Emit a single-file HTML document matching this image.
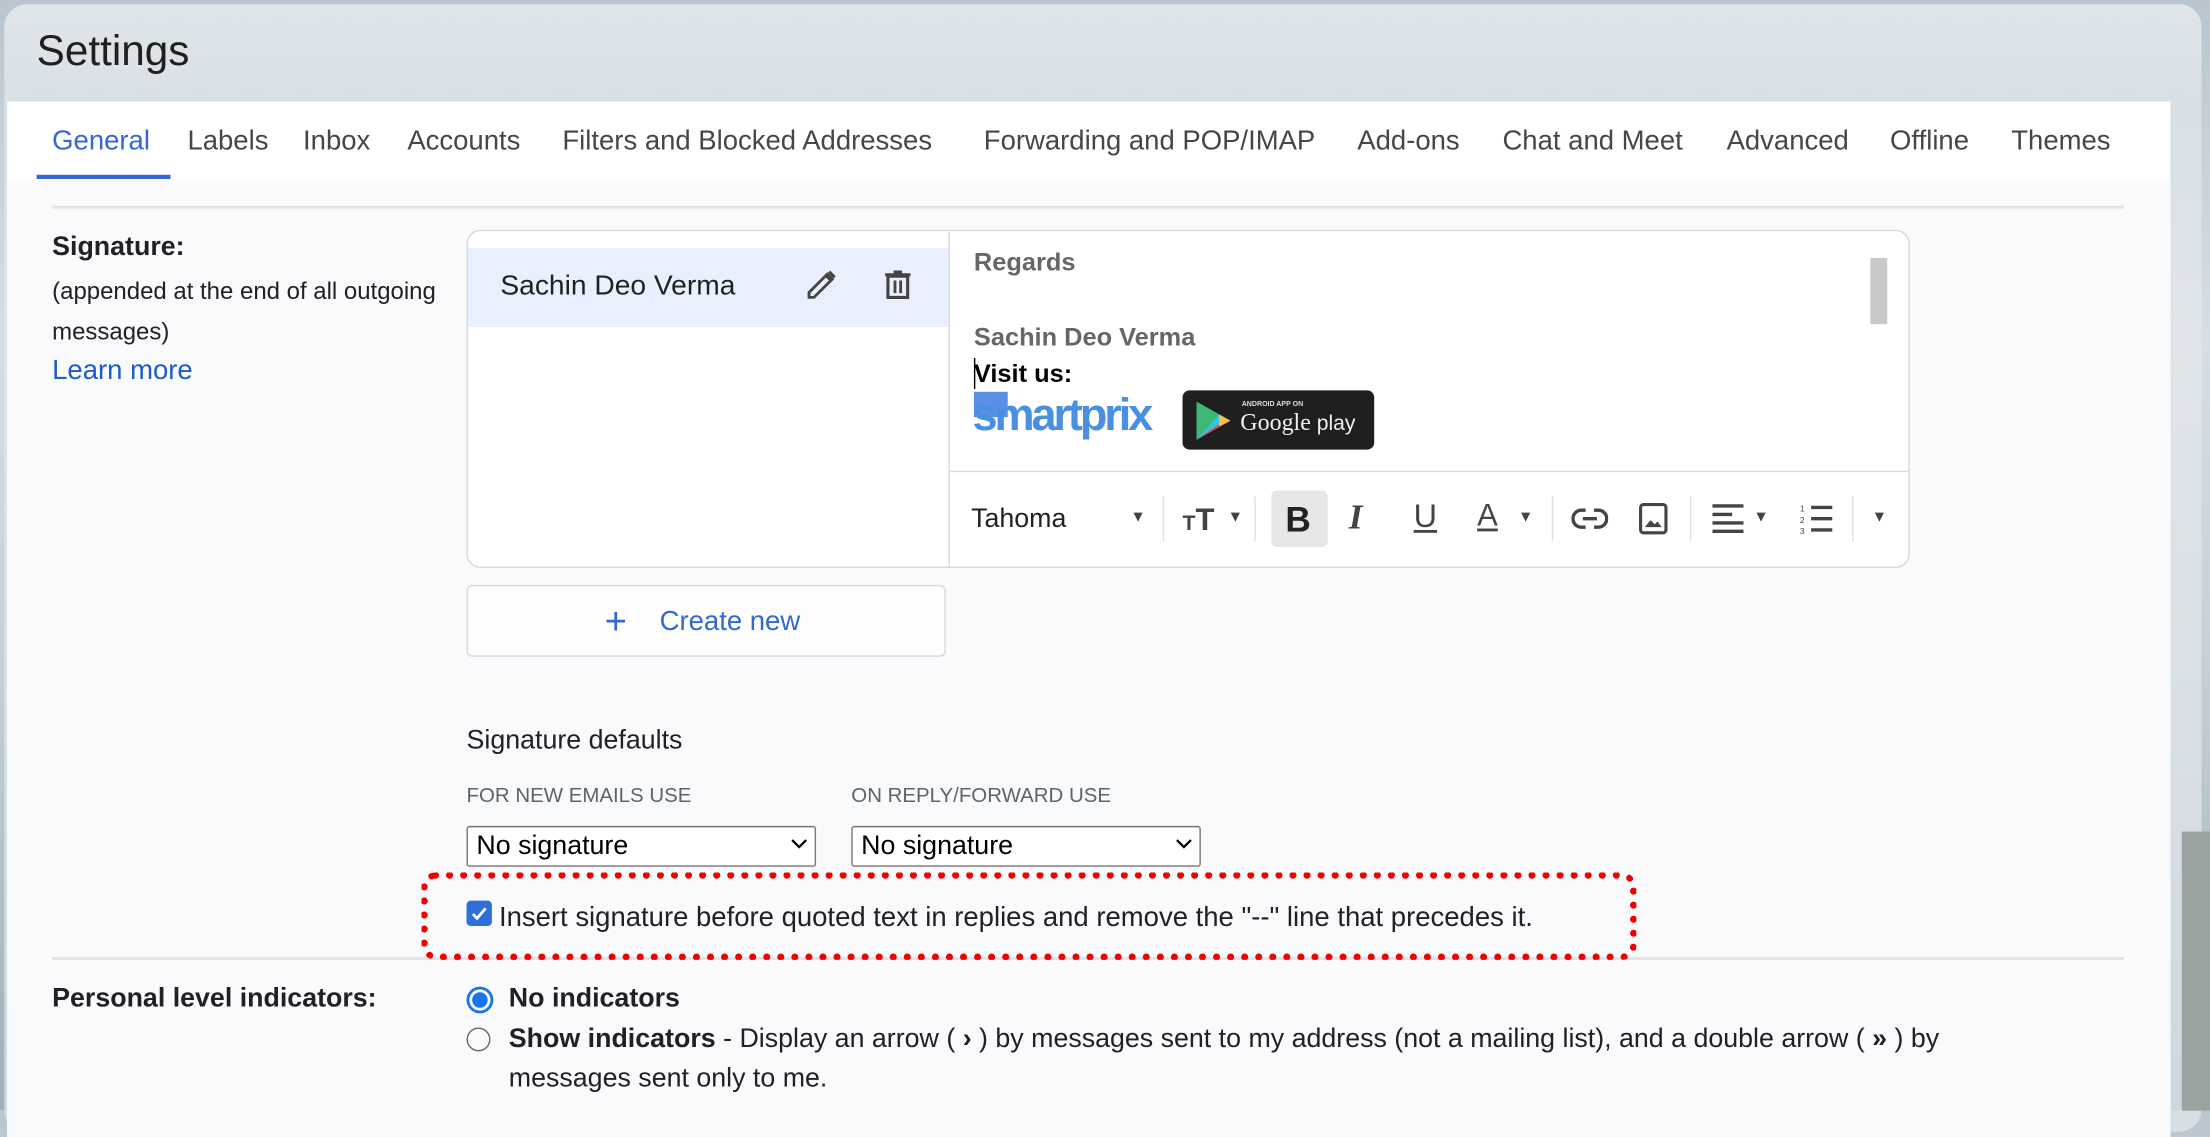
<!DOCTYPE html>
<html><head><meta charset="utf-8"><style>
html,body{margin:0;padding:0;width:2210px;height:1110px;overflow:hidden;}
body{background:linear-gradient(180deg,#b9c6cf 0%,#d7dee3 30%,#c5d0d6 60%,#9fb0b8 100%);font-family:"Liberation Sans",sans-serif;}
#w{position:absolute;left:0;top:0;width:1568px;height:788px;transform:scale(1.40944);transform-origin:0 0;}
.a{position:absolute;white-space:nowrap;}
#panel{position:absolute;left:3px;top:3px;width:1559px;height:800px;border-radius:16px;background:linear-gradient(180deg,rgba(236,240,243,.75),rgba(226,232,236,.7) 70px);}
#content{position:absolute;left:5px;top:127px;width:1535px;height:680px;background:#f9fafb;}
#tabs{position:absolute;left:5px;top:72px;width:1535px;height:55px;background:#fff;box-shadow:0 1px 2px rgba(0,0,0,.08);}
.tab{position:absolute;top:89px;font-size:19.5px;color:#444746;}
.t{color:#202124;}
.hr{position:absolute;height:2px;background:#e3e3e3;}
.r{font-family:"Liberation Sans",sans-serif;font-weight:bold;font-size:18px;}
</style></head><body>
<div id="w">
<div id="panel"></div>
<div style="position:absolute;left:1548px;top:590px;width:20px;height:198px;background:#9aa3a0"></div>
<div class="a t" style="left:26px;top:20px;font-size:30px;color:#1f1f1f">Settings</div>
<div id="tabs"></div>
<div class="tab" style="left:37px;color:#3367d6">General</div>
<div style="position:absolute;left:26px;top:124px;width:95px;height:3px;background:#3367d6"></div>
<div class="tab" style="left:133px">Labels</div>
<div class="tab" style="left:215px">Inbox</div>
<div class="tab" style="left:289px">Accounts</div>
<div class="tab" style="left:399px">Filters and Blocked Addresses</div>
<div class="tab" style="left:698px">Forwarding and POP/IMAP</div>
<div class="tab" style="left:963px">Add-ons</div>
<div class="tab" style="left:1066px">Chat and Meet</div>
<div class="tab" style="left:1225px">Advanced</div>
<div class="tab" style="left:1341px">Offline</div>
<div class="tab" style="left:1427px">Themes</div>
<div id="content"></div>
<div class="hr" style="left:37px;top:146px;width:1470px"></div>

<div class="a t" style="left:37px;top:165px;font-size:19px;font-weight:bold">Signature:</div>
<div class="a t" style="left:37px;top:197px;font-size:17px">(appended at the end of all outgoing</div>
<div class="a t" style="left:37px;top:226px;font-size:17px">messages)</div>
<div class="a" style="left:37px;top:252px;font-size:19.5px;color:#1a5dc7">Learn more</div>

<div style="position:absolute;left:331px;top:163px;width:1022px;height:238px;border:1px solid #d6d8db;border-radius:10px;background:#fff;overflow:hidden">
 <div style="position:absolute;left:0;top:12px;width:341px;height:56px;background:#e9f0fd"></div>
 <div style="position:absolute;left:341px;top:0;width:1px;height:238px;background:#dadce0"></div>
 <div style="position:absolute;left:342px;top:170px;width:680px;height:1px;background:#dadce0"></div>
</div>
<div class="a t" style="left:355px;top:192px;font-size:20px">Sachin Deo Verma</div>
<svg class="a" style="left:571px;top:190px" width="24" height="24" viewBox="0 0 24 24"><path d="M3 21v-3.5L16 4.5l3.5 3.5L6.5 21z" fill="none" stroke="#444" stroke-width="2"/><path d="M15 5.5l3.5 3.5" stroke="#444" stroke-width="2"/><path d="M16.5 3.5l1.5-1.5 4 4-1.5 1.5z" fill="#444"/></svg>
<svg class="a" style="left:626px;top:190px" width="22" height="24" viewBox="0 0 22 24"><path d="M4 6h14v15H4z" fill="none" stroke="#444" stroke-width="2.2"/><path d="M2 5h18M8 3h6" stroke="#444" stroke-width="2.2"/><path d="M9 9v9M13 9v9" stroke="#444" stroke-width="2"/></svg>

<div class="a r" style="left:691px;top:176px;color:#666">Regards</div>
<div class="a r" style="left:691px;top:229px;color:#666">Sachin Deo Verma</div>
<div class="a r" style="left:691px;top:255px;color:#000">Visit us:</div>
<div style="position:absolute;left:691px;top:254px;width:1px;height:22px;background:#000"></div>
<div style="position:absolute;left:1327px;top:183px;width:12px;height:47px;background:#c8c8c8"></div>
<div style="position:absolute;left:691px;top:278px;width:24px;height:18px;background:#5a8fe6"></div>
<div class="a" style="left:690px;top:276px;font-size:32px;font-weight:bold;color:#4a90e2;letter-spacing:-2.2px;font-family:'Liberation Sans Narrow','Liberation Sans',sans-serif">smartprix</div>
<div style="position:absolute;left:839px;top:277px;width:136px;height:42px;background:#1f1f1f;border-radius:5px"></div>
<svg class="a" style="left:847px;top:283px" width="28" height="31" viewBox="0 0 28 31"><path d="M2 2l24 13.5L2 29z" fill="#3bc1e0"/><path d="M2 2l16 9L2 29z" fill="#3bb972"/><path d="M2 29l16-11 8-2.5z" fill="#e2474a"/><path d="M18 11l8 4.5-8 4z" fill="#f9c04d"/></svg>
<div class="a" style="left:881px;top:284px;font-size:5px;color:#ddd;font-weight:bold">ANDROID APP ON</div>
<div class="a" style="left:880px;top:290px;font-size:17px;color:#eee;font-family:'Liberation Serif',serif">Google<span style="font-size:15px;font-family:'Liberation Sans',sans-serif"> play</span></div>

<!-- toolbar -->
<div class="a" style="left:689px;top:358px;font-size:19px;color:#222">Tahoma</div>
<div class="a" style="left:802px;top:361px;font-size:11px;color:#444">▼</div>
<div style="position:absolute;left:825px;top:352px;width:1px;height:32px;background:#e0e0e0"></div>
<div class="a" style="left:839px;top:356px;font-size:22px;font-weight:bold;color:#444"><span style="font-size:15px">T</span>T</div>
<div class="a" style="left:871px;top:361px;font-size:11px;color:#444">▼</div>
<div style="position:absolute;left:890px;top:352px;width:1px;height:32px;background:#e0e0e0"></div>
<div style="position:absolute;left:902px;top:348px;width:40px;height:40px;background:#e6e6e6;border-radius:4px"></div>
<div class="a" style="left:912px;top:355px;font-size:25px;font-weight:bold;color:#222">B</div>
<div class="a" style="left:957px;top:354px;font-size:25px;font-style:italic;font-weight:bold;color:#444;font-family:'Liberation Serif',serif">I</div>
<div class="a" style="left:1003px;top:353px;font-size:23px;color:#444;text-decoration:underline">U</div>
<div class="a" style="left:1048px;top:353px;font-size:22px;color:#444;text-decoration:underline">A</div>
<div class="a" style="left:1077px;top:361px;font-size:11px;color:#444">▼</div>
<div style="position:absolute;left:1101px;top:352px;width:1px;height:32px;background:#e0e0e0"></div>
<svg class="a" style="left:1115px;top:358px" width="26" height="20" viewBox="0 0 26 20"><path d="M10 4H7a6 6 0 000 12h3M16 4h3a6 6 0 010 12h-3M8 10h10" fill="none" stroke="#444" stroke-width="2.4"/></svg>
<svg class="a" style="left:1162px;top:356px" width="22" height="24" viewBox="0 0 22 24"><rect x="2" y="2" width="18" height="20" rx="2" fill="none" stroke="#444" stroke-width="2.2"/><path d="M5 18l4-5 3 3 2-2 3 4z" fill="#444"/></svg>
<div style="position:absolute;left:1199px;top:352px;width:1px;height:32px;background:#e0e0e0"></div>
<svg class="a" style="left:1214px;top:357px" width="24" height="22" viewBox="0 0 24 22"><path d="M1 2h22M1 8h14M1 14h22M1 20h22" stroke="#444" stroke-width="2.4"/></svg>
<div class="a" style="left:1244px;top:361px;font-size:11px;color:#444">▼</div>
<svg class="a" style="left:1277px;top:357px" width="24" height="22" viewBox="0 0 24 22"><path d="M8 3h15M8 11h15M8 19h15" stroke="#444" stroke-width="2.4"/><text x="0" y="6" font-size="6" fill="#444" font-family="Liberation Sans">1</text><text x="0" y="14" font-size="6" fill="#444" font-family="Liberation Sans">2</text><text x="0" y="22" font-size="6" fill="#444" font-family="Liberation Sans">3</text></svg>
<div style="position:absolute;left:1314px;top:352px;width:1px;height:32px;background:#e0e0e0"></div>
<div class="a" style="left:1328px;top:361px;font-size:11px;color:#444">▼</div>

<div style="position:absolute;left:331px;top:415px;width:338px;height:49px;border:1px solid #d6d8db;border-radius:4px;background:#fdfdfd"></div>
<div class="a" style="left:429px;top:426px;font-size:27px;color:#3367d6;font-weight:300">+</div>
<div class="a" style="left:468px;top:430px;font-size:19.5px;color:#3367d6">Create new</div>

<div class="a t" style="left:331px;top:515px;font-size:19px">Signature defaults</div>
<div class="a" style="left:331px;top:557px;font-size:14.5px;color:#5f6368">FOR NEW EMAILS USE</div>
<div class="a" style="left:604px;top:557px;font-size:14.5px;color:#5f6368">ON REPLY/FORWARD USE</div>
<div style="position:absolute;left:331px;top:586px;width:246px;height:27px;border:1px solid #767676;border-radius:2px;background:#fff"></div>
<div class="a" style="left:338px;top:590px;font-size:19px;color:#000">No signature</div>
<svg class="a" style="left:561px;top:595px" width="12" height="8" viewBox="0 0 12 8"><path d="M1 1l5 5 5-5" fill="none" stroke="#000" stroke-width="1.6"/></svg>
<div style="position:absolute;left:604px;top:586px;width:246px;height:27px;border:1px solid #767676;border-radius:2px;background:#fff"></div>
<div class="a" style="left:611px;top:590px;font-size:19px;color:#000">No signature</div>
<svg class="a" style="left:834px;top:595px" width="12" height="8" viewBox="0 0 12 8"><path d="M1 1l5 5 5-5" fill="none" stroke="#000" stroke-width="1.6"/></svg>

<div class="hr" style="left:37px;top:679px;width:1470px"></div>
<div style="position:absolute;left:299px;top:619px;width:852px;height:52px;border:5px dotted #f20000;border-radius:10px"></div>
<div style="position:absolute;left:331px;top:639px;width:18px;height:18px;background:#2f6fd9;border-radius:3px"></div>
<svg class="a" style="left:333px;top:641px" width="14" height="14" viewBox="0 0 14 14"><path d="M2.5 7.5l3 3 6-7" fill="none" stroke="#fff" stroke-width="2"/></svg>
<div class="a t" style="left:354px;top:640px;font-size:19.5px">Insert signature before quoted text in replies and remove the "--" line that precedes it.</div>

<div class="a t" style="left:37px;top:698px;font-size:19px;font-weight:bold">Personal level indicators:</div>
<div style="position:absolute;left:331px;top:700px;width:15px;height:15px;border:2px solid #1a73e8;border-radius:50%"></div>
<div style="position:absolute;left:335px;top:704px;width:11px;height:11px;background:#1a73e8;border-radius:50%"></div>
<div class="a t" style="left:361px;top:698px;font-size:19px;font-weight:bold">No indicators</div>
<div style="position:absolute;left:331px;top:729px;width:15px;height:15px;border:1.5px solid #666;border-radius:50%"></div>
<div class="a t" style="left:361px;top:727px;font-size:19px"><b>Show indicators</b> - Display an arrow ( <b>›</b> ) by messages sent to my address (not a mailing list), and a double arrow ( <b>»</b> ) by</div>
<div class="a t" style="left:361px;top:755px;font-size:19px">messages sent only to me.</div>
</div>
</body></html>
